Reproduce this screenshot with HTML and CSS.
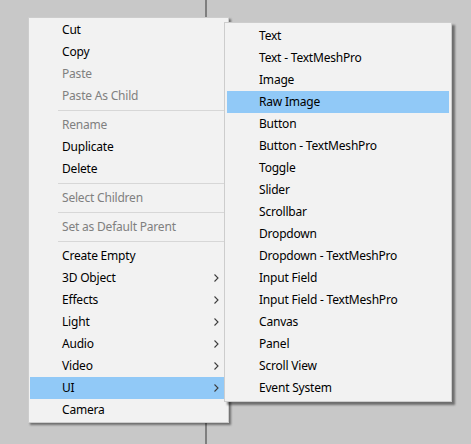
FILE: index.html
```html
<!DOCTYPE html>
<html lang="en">
<head>
    <meta charset="UTF-8">
    <title>Hierarchy Context Menu</title>
    <link rel="stylesheet" href="styles.css">
</head>
<body>
    <div class="workspace">
        <div class="splitter"></div>

        <ul class="menu main-menu">
            <li class="item">Cut</li>
            <li class="item">Copy</li>
            <li class="item disabled">Paste</li>
            <li class="item disabled">Paste As Child</li>
            <li class="separator"></li>
            <li class="item disabled">Rename</li>
            <li class="item">Duplicate</li>
            <li class="item">Delete</li>
            <li class="separator"></li>
            <li class="item disabled">Select Children</li>
            <li class="separator"></li>
            <li class="item disabled">Set as Default Parent</li>
            <li class="separator"></li>
            <li class="item">Create Empty</li>
            <li class="item has-sub">3D Object <svg class="arrow" viewBox="0 0 5 8"><path d="M0.5 0.5 L4 4 L0.5 7.5"/></svg></li>
            <li class="item has-sub">Effects <svg class="arrow" viewBox="0 0 5 8"><path d="M0.5 0.5 L4 4 L0.5 7.5"/></svg></li>
            <li class="item has-sub">Light <svg class="arrow" viewBox="0 0 5 8"><path d="M0.5 0.5 L4 4 L0.5 7.5"/></svg></li>
            <li class="item has-sub">Audio <svg class="arrow" viewBox="0 0 5 8"><path d="M0.5 0.5 L4 4 L0.5 7.5"/></svg></li>
            <li class="item has-sub">Video <svg class="arrow" viewBox="0 0 5 8"><path d="M0.5 0.5 L4 4 L0.5 7.5"/></svg></li>
            <li class="item has-sub active">UI <svg class="arrow" viewBox="0 0 5 8"><path d="M0.5 0.5 L4 4 L0.5 7.5"/></svg></li>
            <li class="item">Camera</li>
        </ul>

        <ul class="menu sub-menu">
            <li class="item">Text</li>
            <li class="item">Text - TextMeshPro</li>
            <li class="item">Image</li>
            <li class="item active">Raw Image</li>
            <li class="item">Button</li>
            <li class="item">Button - TextMeshPro</li>
            <li class="item">Toggle</li>
            <li class="item">Slider</li>
            <li class="item">Scrollbar</li>
            <li class="item">Dropdown</li>
            <li class="item">Dropdown - TextMeshPro</li>
            <li class="item">Input Field</li>
            <li class="item">Input Field - TextMeshPro</li>
            <li class="item">Canvas</li>
            <li class="item">Panel</li>
            <li class="item">Scroll View</li>
            <li class="item">Event System</li>
        </ul>
    </div>
</body>
</html>
```

FILE: styles.css
```css
:root {
    --bg-color: #c8c8c8;
    --menu-color: #f2f2f2;
    --text-color: #000;
    --disabled-color: #808080;
    --highlight-color: #91c9f7;
    --line-color: #d7d7d7;
}

* {
    box-sizing: border-box;
    margin: 0;
    padding: 0;
}

body {
    font-family: 'Noto Sans', 'Noto Sans CJK KR', sans-serif;
    font-size: 12px;
    letter-spacing: -0.2px;
    background-color: var(--bg-color);
    color: var(--text-color);
}

.workspace {
    position: relative;
    width: 471px;
    height: 444px;
    overflow: hidden;
}

.splitter {
    position: absolute;
    left: 205px;
    top: 0;
    bottom: 0;
    width: 2px;
    background-color: #7f7f7f;
}

.menu {
    position: absolute;
    list-style: none;
    background-color: var(--menu-color);
    border: 1px solid #cdcdcd;
}

.main-menu {
    left: 28px;
    top: 17px;
    width: 201px;
    padding: 1px 0;
    box-shadow: 2px 2px 2px rgba(0, 0, 0, 0.45);
}

.sub-menu {
    left: 224px;
    top: 22px;
    width: 228px;
    padding: 2px 0;
    box-shadow: 3px 3px 2px rgba(0, 0, 0, 0.45);
}

.item {
    display: flex;
    align-items: center;
    height: 22px;
    line-height: 22px;
    white-space: nowrap;
}

.main-menu .item {
    margin: 0 1px;
    padding-left: 32px;
    padding-right: 8px;
}

.sub-menu .item {
    margin: 0 2px;
    padding-left: 32px;
}

.item.disabled {
    color: var(--disabled-color);
}

.item.active {
    background-color: var(--highlight-color);
}

.arrow {
    width: 5px;
    height: 8px;
    margin-left: auto;
    fill: none;
    stroke: #3c3c3c;
    stroke-width: 1.1;
}

.main-menu .has-sub {
    padding-right: 8px;
}

.separator {
    height: 1px;
    margin: 3px 4px 3px 29px;
    background-color: var(--line-color);
}
```
